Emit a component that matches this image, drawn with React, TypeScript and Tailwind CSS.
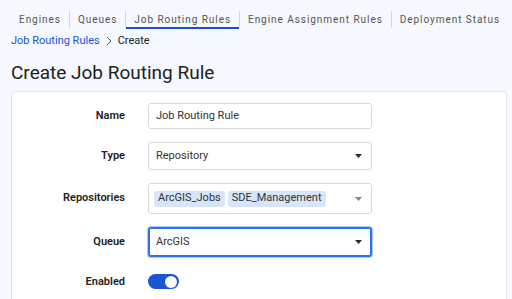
import React from "react";

const Caret = () => (
  <svg width="7" height="4" viewBox="0 0 7 4" className="shrink-0">
    <path d="M0 0 L7 0 L3.5 4 Z" fill="#2b2b2b" />
  </svg>
);

const tabs = ["Engines", "Queues", "Job Routing Rules", "Engine Assignment Rules", "Deployment Status"];

export default function App() {
  return (
    <div
      className="w-[512px] h-[299px] overflow-hidden bg-[#f5f8fe] text-[#222]"
      style={{ fontFamily: "Roboto, 'Liberation Sans', sans-serif" }}
    >
      <div className="flex items-center pl-[11px] pt-[10px] h-[28px] whitespace-nowrap">
        {tabs.map((t, i) => (
          <div
            key={t}
            className={
              "relative shrink-0 flex items-center h-[17px] px-[8px] text-[10px] tracking-[0.95px] text-[#555] " +
              (i > 0 ? "border-l border-[#d4d6da]" : "")
            }
          >
            {t}
            {t === "Job Routing Rules" && (
              <div className="absolute left-0 right-0 bottom-[-1px] h-[2px] bg-[#1b4fc9]" />
            )}
          </div>
        ))}
      </div>
      <div className="flex items-center pl-[11px] mt-[6px] text-[11px] h-[14px]">
        <span className="text-[#1b55c8]">Job Routing Rules</span>
        <svg width="8" height="10" viewBox="0 0 8 10" className="mx-[5px]">
          <path d="M2 1 L6 5 L2 9" stroke="#555" strokeWidth="1" fill="none" />
        </svg>
        <span className="text-[#222]">Create</span>
      </div>
      <div className="pl-[11px] mt-[13px] text-[19px] leading-[24px] text-[#222]">Create Job Routing Rule</div>
      <div className="ml-[11px] mt-[6px] w-[496px] h-[220px] bg-white border border-[#e2e5e9] rounded-[4px] pt-[11px]">
        <div className="grid grid-cols-[113px_224px] gap-x-[23px] gap-y-[13px] items-center text-[11px]">
          <div className="text-right font-semibold">Name</div>
          <div className="h-[26px] border border-[#d3d6da] rounded-[3px] flex items-center px-[7px] text-[#333]">
            Job Routing Rule
          </div>
          <div className="text-right font-semibold">Type</div>
          <div className="h-[28px] border border-[#d3d6da] rounded-[3px] flex items-center justify-between pl-[7px] pr-[9px] text-[#333]">
            <span>Repository</span>
            <Caret />
          </div>
          <div className="text-right font-semibold">Repositories</div>
          <div className="h-[31px] border border-[#d3d6da] rounded-[3px] flex items-center justify-between pl-[5px] pr-[9px] text-[#333]">
            <div className="flex gap-[3px]">
              <span className="bg-[#d7e5fb] rounded-[3px] px-[4px] h-[16px] flex items-center">ArcGIS_Jobs</span>
              <span className="bg-[#d7e5fb] rounded-[3px] px-[4px] h-[16px] flex items-center">SDE_Management</span>
            </div>
            <svg width="7" height="4" viewBox="0 0 7 4">
              <path d="M0 0 L7 0 L3.5 4 Z" fill="#888" />
            </svg>
          </div>
          <div className="text-right font-semibold">Queue</div>
          <div className="h-[30px] border-[2px] border-[#2e73e6] shadow-[0_0_0_1px_#a9cbfb] rounded-[3px] flex items-center justify-between pl-[6px] pr-[8px] text-[#333]">
            <span>ArcGIS</span>
            <Caret />
          </div>
          <div className="text-right font-semibold mt-[4px]">Enabled</div>
          <div className="mt-[4px] h-[16px]">
            <div className="w-[31px] h-[15px] rounded-full bg-[#1b55d0] relative">
              <div className="absolute right-[2px] top-[1.5px] w-[12px] h-[12px] rounded-full bg-white" />
            </div>
          </div>
        </div>
      </div>
    </div>
  );
}
